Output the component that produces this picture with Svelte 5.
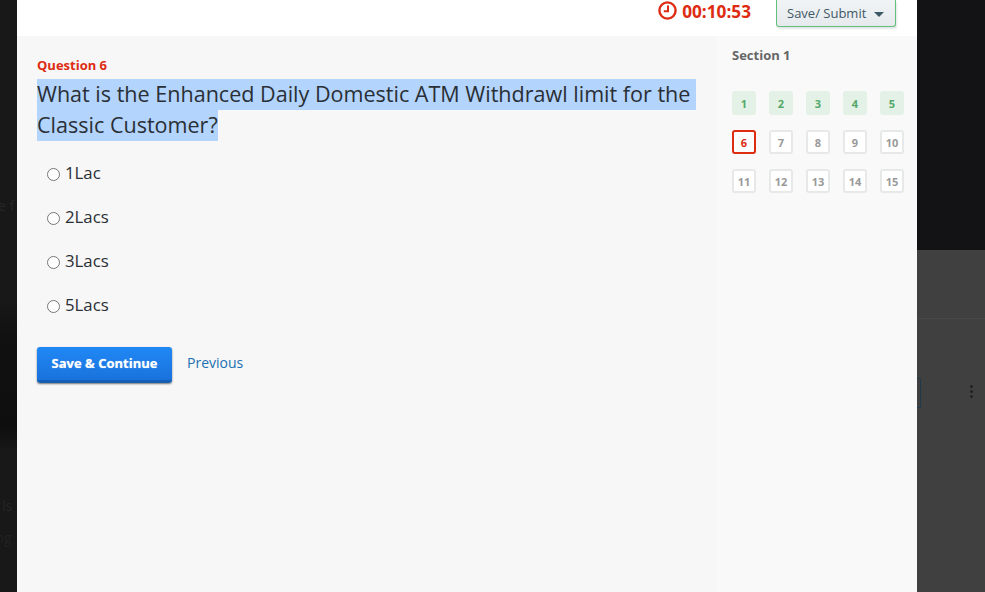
<script>
const options = ["1Lac", "2Lacs", "3Lacs", "5Lacs"];
const questions = Array.from({ length: 15 }, (_, i) => i + 1);

function status(n) {
    if (n < 6) return "done";
    return n === 6 ? "current" : "";
}
</script>

<div class="page">
    <div class="backdrop">
        <div class="back-top"></div>
        <div class="back-bottom">
            <div class="back-rule"></div>
            <div class="back-box"></div>
            <div class="back-dots"><i></i><i></i><i></i></div>
        </div>
        <span class="ghost g1">e f</span>
        <span class="ghost g2">ls</span>
        <span class="ghost g3">ing</span>
        <div class="back-pic"></div>
    </div>

    <div class="modal">
        <header class="topbar">
            <div class="timer">
                <svg width="19" height="19" viewBox="0 0 19 19" fill="none" stroke="#dd2c12">
                    <circle cx="9.5" cy="9.5" r="8.1" stroke-width="2.4" />
                    <path d="M10 4.6V10.2H5.8" stroke-width="2" />
                </svg>
                <span>00:10:53</span>
            </div>
            <button class="submit">Save/ Submit <span class="caret"></span></button>
        </header>

        <div class="content">
            <main class="question">
                <div class="q-label">Question 6</div>
                <h1 class="q-text"><span>What is the Enhanced Daily Domestic ATM Withdrawl limit for the&nbsp;</span><br /><span>Classic Customer?</span></h1>
                <ul class="options">
                    {#each options as option}
                        <li class="option">
                            <input type="radio" name="answer" />
                            <label>{option}</label>
                        </li>
                    {/each}
                </ul>
                <div class="actions">
                    <button class="save">Save &amp; Continue</button>
                    <a class="prev" href="#prev">Previous</a>
                </div>
            </main>

            <aside class="side">
                <div class="section">Section 1</div>
                <div class="grid">
                    {#each questions as n}
                        <div class="cell {status(n)}">{n}</div>
                    {/each}
                </div>
            </aside>
        </div>
    </div>
</div>

<style>
:global(body) {
    margin: 0;
}

.page {
    position: relative;
    width: 985px;
    height: 592px;
    overflow: hidden;
    background-color: #181818;
    font-family: "Open Sans", "Noto Sans", sans-serif;
}

.backdrop {
    position: absolute;
    inset: 0;
}

.back-top {
    position: absolute;
    left: 917px;
    right: 0;
    top: 0;
    height: 250px;
    background-color: #131316;
}

.back-bottom {
    position: absolute;
    left: 917px;
    right: 0;
    top: 250px;
    bottom: 0;
    background-color: #404040;
}

.back-rule {
    position: absolute;
    left: 0;
    right: 0;
    top: 68px;
    height: 1px;
    background-color: #484848;
}

.back-box {
    position: absolute;
    left: -4px;
    top: 128px;
    width: 7px;
    height: 28px;
    border: 1px solid #1d3a48;
    border-left: 0;
    border-radius: 0 2px 2px 0;
}

.back-dots {
    position: absolute;
    left: 53px;
    top: 135px;
    display: flex;
    flex-direction: column;
    gap: 2px;
}

.back-dots i {
    display: block;
    width: 3px;
    height: 3px;
    border-radius: 50%;
    background-color: #222;
}

.ghost {
    position: absolute;
    left: 0;
    color: #262626;
    font-size: 14px;
}

.g1 { top: 196px; left: -2px; }
.g2 { top: 496px; left: 2px; }
.g3 { top: 528px; left: -8px; color: #222; }

.back-pic {
    position: absolute;
    left: 0;
    top: 300px;
    width: 17px;
    height: 148px;
    background: linear-gradient(#181818, #111 25%, #0e0e0e 85%, #161616);
}

.modal {
    position: absolute;
    left: 17px;
    top: 0;
    width: 900px;
    height: 592px;
    display: flex;
    flex-direction: column;
    background-color: #fff;
}

.topbar {
    height: 36px;
    flex: none;
    display: flex;
    justify-content: flex-end;
    padding-right: 21px;
    box-sizing: border-box;
}

.timer {
    display: flex;
    align-items: center;
    gap: 5px;
    height: 21px;
    margin-right: 25px;
    color: #dd2c12;
    font-size: 17.2px;
    font-weight: 700;
}

.timer span {
    margin-top: 1px;
}

.timer svg {
    margin-top: -1px;
}

.submit {
    width: 120px;
    height: 27px;
    margin-top: 0;
    padding: 0 0 0 10px;
    box-sizing: border-box;
    display: flex;
    align-items: center;
    background: linear-gradient(#f1f4f5, #e6eaed);
    border: 1px solid #62c07a;
    border-top: 0;
    border-radius: 0 0 3px 3px;
    box-shadow: 1px 2px 2px #e4e6e7;
    color: #3f5866;
    font-family: inherit;
    font-size: 13px;
}

.caret {
    display: inline-block;
    margin-left: 8px;
    margin-top: 2px;
    border-top: 5px solid #3f5866;
    border-left: 5px solid transparent;
    border-right: 5px solid transparent;
}

.content {
    flex: 1;
    display: flex;
    min-height: 0;
}

.question {
    width: 700px;
    flex: none;
    padding: 20px 20px 0;
    box-sizing: border-box;
    background-color: #f7f7f7;
}

.q-label {
    color: #dd2c12;
    font-size: 13px;
    font-weight: 700;
    line-height: 18px;
}

.q-text {
    margin: 5px 0 0;
    color: #2a2f36;
    font-size: 21.55px;
    font-weight: 400;
    line-height: 31px;
    white-space: nowrap;
}

.q-text span {
    display: inline-block;
    vertical-align: top;
    line-height: 29px;
    padding-bottom: 2px;
    background-color: #b3d4fc;
}

.options {
    list-style: none;
    margin: 10px 0 0;
    padding: 0 0 0 10px;
}

.option {
    display: flex;
    align-items: center;
    height: 44px;
    color: #2a2f36;
    font-size: 16.8px;
}

.option label {
    margin-top: -2px;
}

.option input {
    width: 13px;
    height: 13px;
    margin: 2px 5px 0 0;
}

.actions {
    display: flex;
    align-items: center;
    gap: 15px;
    margin-top: 20px;
}

.save {
    width: 135px;
    height: 36px;
    padding: 0 0 1px;
    background: linear-gradient(#2088f5, #1a72dc);
    border: 0;
    border-bottom: 3px solid #1560b4;
    border-radius: 3px;
    box-shadow: 0 1px 2px #777;
    color: #fff;
    font-family: inherit;
    font-size: 13px;
    font-weight: 700;
    text-shadow: 0 0 1px rgba(255, 255, 255, 0.6);
}

.prev {
    margin-top: -6px;
    color: #1a70b0;
    font-size: 14px;
    text-decoration: none;
}

.side {
    flex: 1;
    padding: 11px 13px 0 15px;
    background-color: #f9f9f9;
}

.section {
    color: #666;
    font-size: 13px;
    font-weight: 700;
    line-height: 16px;
}

.grid {
    display: grid;
    grid-template-columns: repeat(5, 24px);
    grid-auto-rows: 24px;
    justify-content: space-between;
    row-gap: 15px;
    margin-top: 28px;
}

.cell {
    display: flex;
    align-items: center;
    justify-content: center;
    box-sizing: border-box;
    background-color: #fff;
    border: 2px solid #e6e9e8;
    border-radius: 3px;
    color: #999;
    font-size: 11px;
    font-weight: 700;
}

.cell.done {
    background-color: #e3f1e6;
    border-color: #e3f1e6;
    color: #55a868;
}

.cell.current {
    border-color: #dd2c12;
    color: #dd2c12;
}
</style>
